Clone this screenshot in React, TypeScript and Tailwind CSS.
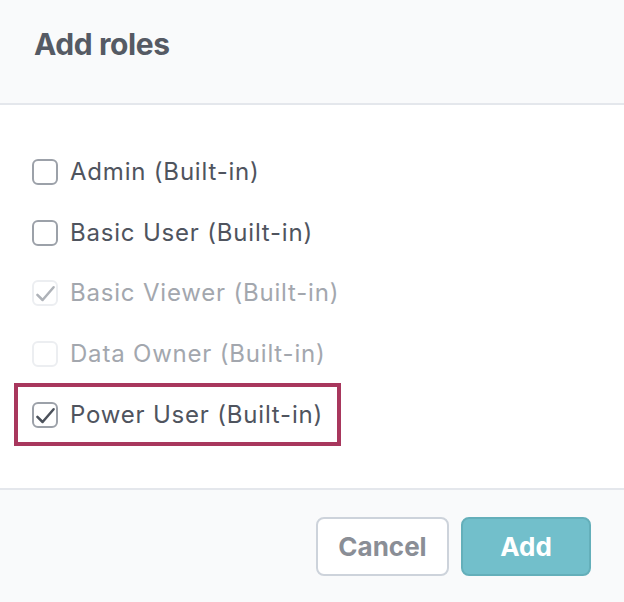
const roles = [
  { label: "Admin (Built-in)", checked: false, disabled: false },
  { label: "Basic User (Built-in)", checked: false, disabled: false },
  { label: "Basic Viewer (Built-in)", checked: true, disabled: true },
  { label: "Data Owner (Built-in)", checked: false, disabled: true },
];

function Box({ checked, disabled }: { checked: boolean; disabled: boolean }) {
  return (
    <span
      className={
        "flex h-[26px] w-[26px] shrink-0 items-center justify-center rounded-[6px] border-2 bg-white " +
        (disabled ? "border-[#eceef1]" : "border-[#9ca1a9]")
      }
    >
      {checked && (
        <svg viewBox="2 2 22 22" className="h-[22px] w-[22px]" fill="none">
          <path
            d="M5.4 14.8l5.2 5.2L21.6 7.2"
            stroke={disabled ? "#aeb2b8" : "#4b515b"}
            strokeWidth="2.5"
            strokeLinecap="round"
            strokeLinejoin="round"
          />
        </svg>
      )}
    </span>
  );
}

export default function App() {
  return (
    <div className="flex h-[602px] w-[624px] flex-col bg-white font-['Inter',sans-serif]">
      <div className="flex h-[105px] shrink-0 items-center border-b-2 border-[#e4e7ec] bg-[#f9fafb] px-[34px] pb-[14px]">
        <h1 className="text-[30px] font-bold tracking-[-0.4px] text-[#555a64]">Add roles</h1>
      </div>
      <div className="flex flex-1 flex-col pt-[37px]">
        {roles.map((r) => (
          <label key={r.label} className="flex h-[60.5px] items-center gap-[12px] pl-[32px]">
            <Box checked={r.checked} disabled={r.disabled} />
            <span
              className={
                "text-[24px] tracking-[0.8px] " + (r.disabled ? "text-[#a3a7ae]" : "text-[#4f545e]")
              }
            >
              {r.label}
            </span>
          </label>
        ))}
        <div className="-mt-[1px] ml-[14px] flex h-[63px] w-[327px] items-center gap-[12px] border-4 border-[#a8375d] pl-[14px]">
          <Box checked={true} disabled={false} />
          <span className="text-[24px] tracking-[0.8px] text-[#4f545e]">Power User (Built-in)</span>
        </div>
      </div>
      <div className="flex h-[114px] shrink-0 items-center justify-end gap-[12px] border-t-2 border-[#e4e7ec] bg-[#f9fafb] pr-[33px]">
        <button className="h-[59px] w-[133px] rounded-[8px] border-2 border-[#cdd3db] bg-white text-[26px] font-bold text-[#8a8e96]">
          Cancel
        </button>
        <button className="h-[59px] w-[130px] rounded-[8px] border-2 border-[#64afba] bg-[#72bfcb] text-[26px] font-bold text-white">
          Add
        </button>
      </div>
    </div>
  );
}
